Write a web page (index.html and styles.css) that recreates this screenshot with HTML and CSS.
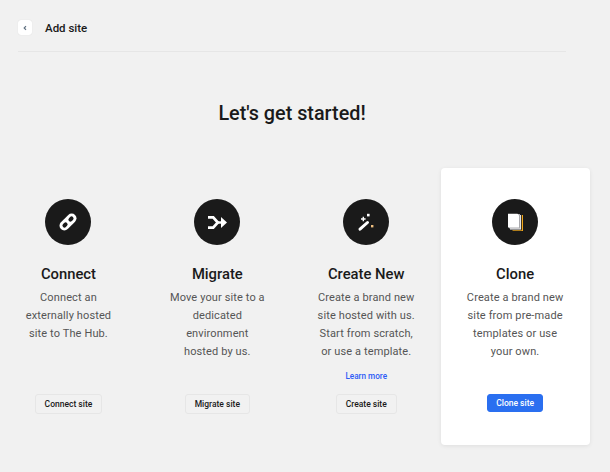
FILE: index.html
```html
<!DOCTYPE html>
<html lang="en">
<head>
    <meta charset="UTF-8">
    <title>Add site</title>
    <link rel="stylesheet" href="styles.css">
</head>
<body>
    <header class="top-bar">
        <button class="back-btn" type="button" aria-label="Back">
            <svg width="6" height="6" viewBox="0 0 6 6"><path d="M4 1.2 L2.2 3 L4 4.8" fill="none" stroke="#5f7080" stroke-width="1.2"/></svg>
        </button>
        <span class="top-title">Add site</span>
    </header>

    <h1 class="heading">Let's get started!</h1>

    <div class="options">
        <div class="option">
            <div class="icon-circle">
                <svg width="20" height="20" viewBox="0 0 20 20"><g transform="rotate(-45 10 10)"><rect x="0" y="5.2" width="20" height="9.6" rx="4.8" fill="#fff"/><rect x="3" y="8" width="5.6" height="4" rx="2" fill="#1a1a1a"/><rect x="11.4" y="8" width="5.6" height="4" rx="2" fill="#1a1a1a"/></g></svg>
            </div>
            <h2 class="option-title">Connect</h2>
            <p class="option-text">Connect an<br>externally hosted<br>site to The Hub.</p>
            <div class="option-foot"><button class="btn" type="button">Connect site</button></div>
        </div>
        <div class="option">
            <div class="icon-circle">
                <svg width="20" height="20" viewBox="0 0 20 20"><path d="M1 5.4 H6.2 L10.8 10.5 L6.2 15.6 H1" fill="none" stroke="#fff" stroke-width="2.8"/><path d="M9 10.5 H15" stroke="#fff" stroke-width="2.4"/><path d="M14 5 L20 10.5 L14 16 Z" fill="#fff"/></svg>
            </div>
            <h2 class="option-title">Migrate</h2>
            <p class="option-text">Move your site to a<br>dedicated<br>environment<br>hosted by us.</p>
            <div class="option-foot"><button class="btn" type="button">Migrate site</button></div>
        </div>
        <div class="option">
            <div class="icon-circle">
                <svg width="20" height="20" viewBox="0 0 20 20"><path d="M4 17.2 L11.5 10.5" stroke="#fff" stroke-width="3" stroke-linecap="round"/><path d="M5 7 h4.6 M7.3 4.7 v4.6" stroke="#fff" stroke-width="1.4"/><rect x="11" y="1.8" width="2.6" height="2.6" fill="#fff"/><rect x="15" y="13" width="2.4" height="2.4" fill="#f0c080"/></svg>
            </div>
            <h2 class="option-title">Create New</h2>
            <p class="option-text">Create a brand new<br>site hosted with us.<br>Start from scratch,<br>or use a template.</p>
            <a class="learn-more" href="#">Learn more</a>
            <div class="option-foot"><button class="btn" type="button">Create site</button></div>
        </div>
        <div class="option option-active">
            <div class="icon-circle">
                <svg width="16" height="18" viewBox="0 0 16 18"><rect x="5.5" y="2" width="10.5" height="16" fill="#f0a81e"/><rect x="4.5" y="2" width="10.3" height="15.3" fill="#1a1a1a"/><rect x="3" y="2" width="11" height="14.6" fill="#e4e4e6"/><rect x="2" y="1" width="11" height="14.4" fill="#a8a8ac"/><path d="M1 0.8 H10.5 L12 2.3 V14.6 H1 Z" fill="#fff"/></svg>
            </div>
            <h2 class="option-title">Clone</h2>
            <p class="option-text">Create a brand new<br>site from pre-made<br>templates or use<br>your own.</p>
            <div class="option-foot"><button class="btn btn-blue" type="button">Clone site</button></div>
        </div>
    </div>
</body>
</html>
```

FILE: styles.css
```css
html, body {
    height: 100%;
}
body {
    margin: 0;
    padding: 0 18px;
    height: 472px;
    box-sizing: border-box;
    overflow: hidden;
    background-color: #f1f1f1;
    color: #1a1a1a;
    font-family: Roboto, "Liberation Sans", sans-serif;
}
.top-bar {
    display: flex;
    align-items: center;
    gap: 13px;
    width: 548px;
    height: 52px;
    padding-top: 4px;
    box-sizing: border-box;
    border-bottom: 1px solid #e6e6e6;
}
.back-btn {
    display: flex;
    align-items: center;
    justify-content: center;
    width: 14px;
    height: 15px;
    padding: 0;
    box-sizing: content-box;
    background-color: #fff;
    border: 0;
    border-radius: 3px;
    box-shadow: 0 0 1px rgba(0, 0, 0, 0.15);
}
.top-title {
    font-size: 11.5px;
    font-weight: 500;
    color: #1a1a1a;
}
.heading {
    margin: 49px 0 0;
    width: 548px;
    text-align: center;
    font-size: 19.8px;
    line-height: 26px;
    font-weight: 500;
}
.options {
    display: grid;
    grid-template-columns: repeat(4, 148.9px);
    margin: 41px 0 0 -24px;
    height: 277px;
}
.option {
    display: flex;
    flex-direction: column;
    align-items: center;
    padding-top: 31px;
    border-radius: 4px;
    text-align: center;
    position: relative;
}
.option-active {
    background-color: #fff;
    box-shadow: 0 1px 4px rgba(0, 0, 0, 0.08);
}
.icon-circle {
    display: flex;
    align-items: center;
    justify-content: center;
    width: 46px;
    height: 46px;
    border-radius: 50%;
    background-color: #1a1a1a;
}
.option-title {
    margin: 19px 0 0;
    font-size: 14.8px;
    line-height: 20px;
    font-weight: 500;
}
.option-text {
    margin: 5px 0 0;
    font-size: 11px;
    line-height: 18px;
    letter-spacing: 0.12px;
    color: #555;
}
.learn-more {
    margin-top: 9px;
    font-size: 8.2px;
    line-height: 12px;
    font-weight: 500;
    color: #2d5cf6;
    text-decoration: none;
}
.option-foot {
    position: absolute;
    left: 0;
    right: 0;
    top: 226px;
}
.btn {
    display: block;
    margin: 0 auto;
    height: 20px;
    padding: 0 9px;
    font-family: inherit;
    font-size: 8.5px;
    font-weight: 500;
    color: #1a1a1a;
    background-color: #f1f1f1;
    border: 1px solid #e6e6e6;
    border-radius: 3px;
}
.btn-blue {
    height: 18px;
    padding: 0 8px;
    color: #fff;
    background-color: #2a6ff0;
    border-color: #2a6ff0;
}
```
